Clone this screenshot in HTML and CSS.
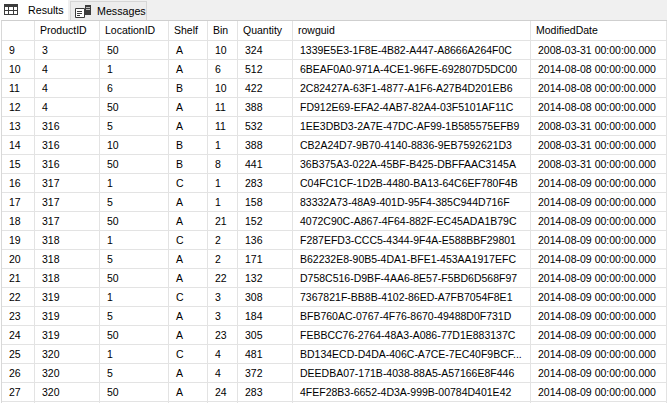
FILE: index.html
```html
<!DOCTYPE html>
<html lang="en">
<head>
<meta charset="utf-8">
<title>Results</title>
<link rel="stylesheet" href="styles.css">
</head>
<body>
<div class="tabs">
  <div class="tab active">
    <svg class="ico ico-grid" width="14" height="11" viewBox="0 0 14 11"><rect x="0.5" y="0.5" width="13" height="10" fill="#fff" stroke="#3c3c3c"/><rect x="0" y="0" width="14" height="3" fill="#3c3c3c"/><path d="M0 6.5H14M4.5 3V11M9.5 3V11" stroke="#3c3c3c"/></svg>
    <span>Results</span>
  </div>
  <div class="tab">
    <svg class="ico ico-msg" width="17" height="13" viewBox="0 0 17 13"><path d="M0.5 3.5h9v9h-9z" fill="#fff" stroke="#3c3c3c"/><path d="M2 6.5h5M2 8.5h5M2 10.5h3" stroke="#3c3c3c"/><rect x="10" y="0" width="6" height="10" fill="#3c3c3c"/><path d="M11 2.5h4M11 4.5h4" stroke="#bdbdbd"/></svg>
    <span>Messages</span>
  </div>
</div>
<div class="grid" role="table">
  <div class="row head" role="row"><div class="c"></div><div class="c">ProductID</div><div class="c">LocationID</div><div class="c">Shelf</div><div class="c">Bin</div><div class="c">Quantity</div><div class="c">rowguid</div><div class="c">ModifiedDate</div></div>
  <div class="row" role="row"><div class="c">9</div><div class="c">3</div><div class="c">50</div><div class="c">A</div><div class="c">10</div><div class="c">324</div><div class="c">1339E5E3-1F8E-4B82-A447-A8666A264F0C</div><div class="c">2008-03-31 00:00:00.000</div></div>
  <div class="row" role="row"><div class="c">10</div><div class="c">4</div><div class="c">1</div><div class="c">A</div><div class="c">6</div><div class="c">512</div><div class="c">6BEAF0A0-971A-4CE1-96FE-692807D5DC00</div><div class="c">2014-08-08 00:00:00.000</div></div>
  <div class="row" role="row"><div class="c">11</div><div class="c">4</div><div class="c">6</div><div class="c">B</div><div class="c">10</div><div class="c">422</div><div class="c">2C82427A-63F1-4877-A1F6-A27B4D201EB6</div><div class="c">2014-08-08 00:00:00.000</div></div>
  <div class="row" role="row"><div class="c">12</div><div class="c">4</div><div class="c">50</div><div class="c">A</div><div class="c">11</div><div class="c">388</div><div class="c">FD912E69-EFA2-4AB7-82A4-03F5101AF11C</div><div class="c">2014-08-08 00:00:00.000</div></div>
  <div class="row" role="row"><div class="c">13</div><div class="c">316</div><div class="c">5</div><div class="c">A</div><div class="c">11</div><div class="c">532</div><div class="c">1EE3DBD3-2A7E-47DC-AF99-1B585575EFB9</div><div class="c">2008-03-31 00:00:00.000</div></div>
  <div class="row" role="row"><div class="c">14</div><div class="c">316</div><div class="c">10</div><div class="c">B</div><div class="c">1</div><div class="c">388</div><div class="c">CB2A24D7-9B70-4140-8836-9EB7592621D3</div><div class="c">2008-03-31 00:00:00.000</div></div>
  <div class="row" role="row"><div class="c">15</div><div class="c">316</div><div class="c">50</div><div class="c">B</div><div class="c">8</div><div class="c">441</div><div class="c">36B375A3-022A-45BF-B425-DBFFAAC3145A</div><div class="c">2008-03-31 00:00:00.000</div></div>
  <div class="row" role="row"><div class="c">16</div><div class="c">317</div><div class="c">1</div><div class="c">C</div><div class="c">1</div><div class="c">283</div><div class="c">C04FC1CF-1D2B-4480-BA13-64C6EF780F4B</div><div class="c">2014-08-09 00:00:00.000</div></div>
  <div class="row" role="row"><div class="c">17</div><div class="c">317</div><div class="c">5</div><div class="c">A</div><div class="c">1</div><div class="c">158</div><div class="c">83332A73-48A9-401D-95F4-385C944D716F</div><div class="c">2014-08-09 00:00:00.000</div></div>
  <div class="row" role="row"><div class="c">18</div><div class="c">317</div><div class="c">50</div><div class="c">A</div><div class="c">21</div><div class="c">152</div><div class="c">4072C90C-A867-4F64-882F-EC45ADA1B79C</div><div class="c">2014-08-09 00:00:00.000</div></div>
  <div class="row" role="row"><div class="c">19</div><div class="c">318</div><div class="c">1</div><div class="c">C</div><div class="c">2</div><div class="c">136</div><div class="c">F287EFD3-CCC5-4344-9F4A-E588BBF29801</div><div class="c">2014-08-09 00:00:00.000</div></div>
  <div class="row" role="row"><div class="c">20</div><div class="c">318</div><div class="c">5</div><div class="c">A</div><div class="c">2</div><div class="c">171</div><div class="c">B62232E8-90B5-4DA1-BFE1-453AA1917EFC</div><div class="c">2014-08-09 00:00:00.000</div></div>
  <div class="row" role="row"><div class="c">21</div><div class="c">318</div><div class="c">50</div><div class="c">A</div><div class="c">22</div><div class="c">132</div><div class="c">D758C516-D9BF-4AA6-8E57-F5BD6D568F97</div><div class="c">2014-08-09 00:00:00.000</div></div>
  <div class="row" role="row"><div class="c">22</div><div class="c">319</div><div class="c">1</div><div class="c">C</div><div class="c">3</div><div class="c">308</div><div class="c">7367821F-BB8B-4102-86ED-A7FB7054F8E1</div><div class="c">2014-08-09 00:00:00.000</div></div>
  <div class="row" role="row"><div class="c">23</div><div class="c">319</div><div class="c">5</div><div class="c">A</div><div class="c">3</div><div class="c">184</div><div class="c">BFB760AC-0767-4F76-8670-49488D0F731D</div><div class="c">2014-08-09 00:00:00.000</div></div>
  <div class="row" role="row"><div class="c">24</div><div class="c">319</div><div class="c">50</div><div class="c">A</div><div class="c">23</div><div class="c">305</div><div class="c">FEBBCC76-2764-48A3-A086-77D1E883137C</div><div class="c">2014-08-09 00:00:00.000</div></div>
  <div class="row" role="row"><div class="c">25</div><div class="c">320</div><div class="c">1</div><div class="c">C</div><div class="c">4</div><div class="c">481</div><div class="c">BD134ECD-D4DA-406C-A7CE-7EC40F9BCF...</div><div class="c">2014-08-09 00:00:00.000</div></div>
  <div class="row" role="row"><div class="c">26</div><div class="c">320</div><div class="c">5</div><div class="c">A</div><div class="c">4</div><div class="c">372</div><div class="c">DEEDBA07-171B-4038-88A5-A57166E8F446</div><div class="c">2014-08-09 00:00:00.000</div></div>
  <div class="row" role="row"><div class="c">27</div><div class="c">320</div><div class="c">50</div><div class="c">A</div><div class="c">24</div><div class="c">283</div><div class="c">4FEF28B3-6652-4D3A-999B-00784D401E42</div><div class="c">2014-08-09 00:00:00.000</div></div>
  <div class="row" role="row"><div class="c"></div><div class="c"></div><div class="c"></div><div class="c"></div><div class="c"></div><div class="c"></div><div class="c"></div><div class="c"></div></div>
</div>
</body>
</html>
```

FILE: styles.css
```css
html, body {
  margin: 0;
  padding: 0;
}
body {
  width: 667px;
  height: 403px;
  overflow: hidden;
  background: #fff;
  color: #000;
  font-family: "Liberation Sans", Arial, sans-serif;
  font-size: 10.5px;
}
.tabs {
  height: 20px;
  background: #f0f0f0;
  display: flex;
  align-items: flex-end;
  gap: 2px;
  font-size: 10.7px;
}
.tab {
  box-sizing: border-box;
  height: 19px;
  display: flex;
  align-items: center;
  background: #ededed;
  border: 1px solid #d6d6d6;
  border-bottom: none;
  width: 77px;
  padding-left: 4px;
}
.tab.active {
  height: 20px;
  width: 68px;
  background: #fff;
  border: none;
  padding-left: 4px;
}
.ico {
  display: block;
  flex: none;
}
.ico-grid {
  margin-right: 10px;
  margin-top: -2px;
}
.ico-msg {
  margin-right: 5px;
}
.grid {
  margin-left: 1px;
  border-top: 1px solid #cfcfcf;
  border-left: 1px solid #d8d8d8;
}
.row {
  display: grid;
  grid-template-columns: 33px 65px 69px 39px 30px 55px 238px 136px;
}
.c {
  box-sizing: border-box;
  height: 19px;
  line-height: 18px;
  padding-left: 7px;
  border-right: 1px solid #e3e3e3;
  border-bottom: 1px solid #e3e3e3;
  white-space: nowrap;
  overflow: hidden;
}
.head .c {
  height: 20px;
  line-height: 19px;
  padding-left: 5px;
}
```
